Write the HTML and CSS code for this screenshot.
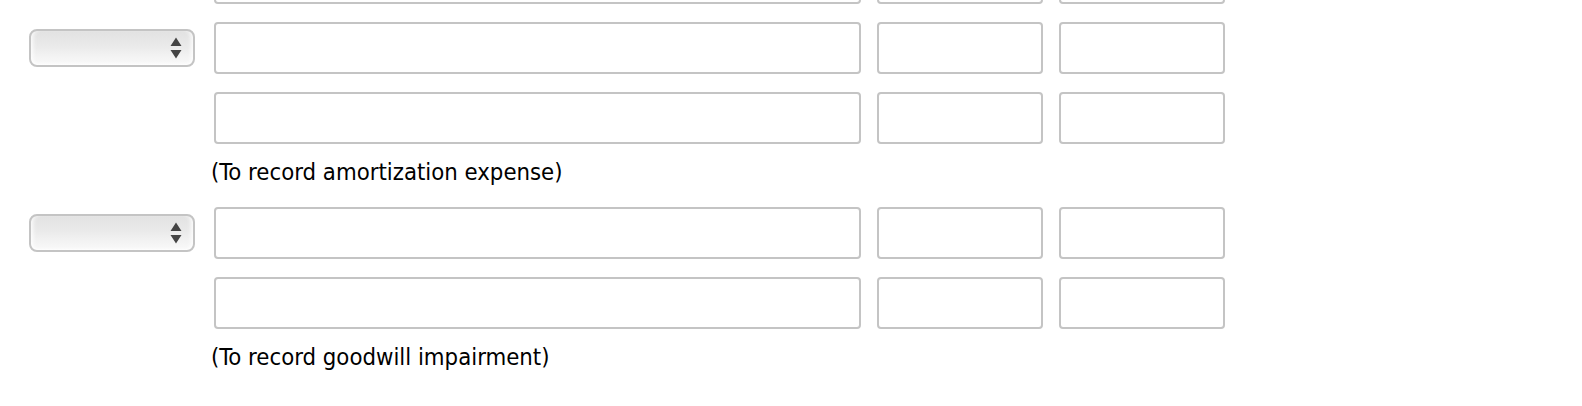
FILE: index.html
```html
<!DOCTYPE html>
<html lang="en">
<head>
<meta charset="utf-8">
<title>Journal entries</title>
<link rel="stylesheet" href="styles.css">
</head>
<body>
<div class="sheet">
  <div class="row">
    <div class="lead"></div>
    <input class="field account" type="text">
    <input class="field amount" type="text">
    <input class="field amount" type="text">
  </div>

  <div class="entry">
    <div class="row">
      <div class="lead">
        <div class="picker">
          <svg class="arrows" width="12" height="22" viewBox="0 0 12 22"><path d="M6 0.5 L11.5 9 L0.5 9 Z M0.5 13 L11.5 13 L6 21.5 Z" fill="#444"/></svg>
        </div>
      </div>
      <input class="field account" type="text">
      <input class="field amount" type="text">
      <input class="field amount" type="text">
    </div>
    <div class="row">
      <div class="lead"></div>
      <input class="field account" type="text">
      <input class="field amount" type="text">
      <input class="field amount" type="text">
    </div>
    <p class="caption">(To record amortization expense)</p>
  </div>

  <div class="entry">
    <div class="row">
      <div class="lead">
        <div class="picker">
          <svg class="arrows" width="12" height="22" viewBox="0 0 12 22"><path d="M6 0.5 L11.5 9 L0.5 9 Z M0.5 13 L11.5 13 L6 21.5 Z" fill="#444"/></svg>
        </div>
      </div>
      <input class="field account" type="text">
      <input class="field amount" type="text">
      <input class="field amount" type="text">
    </div>
    <div class="row">
      <div class="lead"></div>
      <input class="field account" type="text">
      <input class="field amount" type="text">
      <input class="field amount" type="text">
    </div>
    <p class="caption">(To record goodwill impairment)</p>
  </div>
</div>
</body>
</html>
```

FILE: styles.css
```css
html, body {
  margin: 0;
  padding: 0;
  background: #fff;
  overflow: hidden;
}

body {
  font-family: "DejaVu Sans", Verdana, sans-serif;
  color: #000;
}

.sheet {
  margin-top: -48px;
  padding-left: 29px;
}

.row {
  display: flex;
  align-items: center;
  height: 52px;
  margin-bottom: 18px;
}

.lead {
  width: 166px;
  margin-right: 19px;
  flex: none;
}

.picker {
  box-sizing: border-box;
  width: 166px;
  height: 38px;
  border: 2px solid #c4c4c4;
  border-radius: 8px;
  background: linear-gradient(to bottom, #e2e2e2 0%, #eaeaea 45%, #f3f3f3 75%, #f9f9f9 100%);
  box-shadow: inset 5px 0 4px -3px rgba(255, 255, 255, 0.9),
              inset -5px 0 4px -3px rgba(255, 255, 255, 0.9),
              inset 0 -3px 3px -2px rgba(255, 255, 255, 0.9);
  display: flex;
  align-items: center;
  justify-content: flex-end;
  padding-right: 11px;
}

.arrows {
  display: block;
}

.field {
  box-sizing: border-box;
  height: 52px;
  margin: 0 16px 0 0;
  padding: 0 8px;
  border: 2px solid #c4c4c4;
  border-radius: 4px;
  background: #fff;
  font: 16px "DejaVu Sans", sans-serif;
  flex: none;
}

.field.account {
  width: 647px;
}

.field.amount {
  width: 166px;
}

.caption {
  margin: -1px 0 24px 0;
  padding-left: 182px;
  font-family: "DejaVu Sans Condensed", "DejaVu Sans", sans-serif;
  font-stretch: condensed;
  font-size: 23.7px;
  line-height: 22px;
}
```
